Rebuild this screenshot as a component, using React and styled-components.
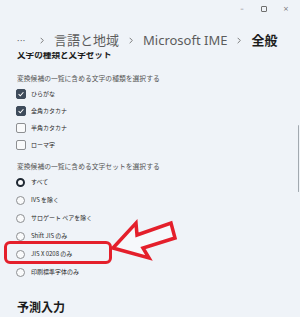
import styled, { createGlobalStyle } from "styled-components";

const GlobalStyle = createGlobalStyle`
    html, body {
        margin: 0;
        padding: 0;
        background: #eff3f8;
    }
`

const checkItems = [
    { label: "ひらがな", checked: true },
    { label: "全角カタカナ", checked: true },
    { label: "半角カタカナ", checked: false },
    { label: "ローマ字", checked: false },
];

const radioItems = [
    { label: "すべて", selected: true },
    { label: "IVS を除く" },
    { label: "サロゲート ペアを除く" },
    { label: "Shift JIS のみ" },
    { label: "JIS X 0208 のみ", marked: true },
    { label: "印刷標準字体のみ" },
];

function Chevron() {
    return (
        <ChevronIcon viewBox="0 0 6 10" width="4" height="7">
            <path d="M1 1 L5 5 L1 9" fill="none" stroke="#6b6b6b" strokeWidth="1.3" />
        </ChevronIcon>
    );
}

function CheckRow({ label, checked }) {
    return (
        <Row>
            <Box checked={checked}>
                {checked && (
                    <svg viewBox="0 0 10 10" width="8" height="8">
                        <path d="M2 5.2 L4.1 7.2 L8 2.8" fill="none" stroke="#ffffff" strokeWidth="1.3" />
                    </svg>
                )}
            </Box>
            <Label>{label}</Label>
        </Row>
    );
}

function RadioRow({ label, selected, marked }) {
    return (
        <RadioLine>
            <Circle selected={selected} />
            <Label>{label}</Label>
            {marked && (
                <>
                    <Highlight />
                    <Arrow viewBox="108 218 72 46" width="72" height="46">
                        <polygon
                            points="113,248 136,223 137,235 171,223 175,238 143,248 149,258"
                            fill="#f6f8fb"
                            stroke="#e41f2b"
                            strokeWidth="3.5"
                            strokeLinejoin="miter"
                        />
                    </Arrow>
                </>
            )}
        </RadioLine>
    );
}

export default function App() {
    return (
        <>
            <GlobalStyle />
            <Window>
                <TitleBar>
                    <Control>–</Control>
                    <Control><MaxBox /></Control>
                    <Control>×</Control>
                </TitleBar>
                <Breadcrumb>
                    <Dots>···</Dots>
                    <Chevron />
                    <Crumb>言語と地域</Crumb>
                    <Chevron />
                    <Crumb>Microsoft IME</Crumb>
                    <Chevron />
                    <Current>全般</Current>
                </Breadcrumb>
                <Content>
                    <Scroll>
                        <SectionTitle>文字の種類と文字セット</SectionTitle>
                        <Description>変換候補の一覧に含める文字の種類を選択する</Description>
                        <List>
                            {checkItems.map((item) => (
                                <CheckRow key={item.label} {...item} />
                            ))}
                        </List>
                        <Description gap="8px">変換候補の一覧に含める文字セットを選択する</Description>
                        <List>
                            {radioItems.map((item) => (
                                <RadioRow key={item.label} {...item} />
                            ))}
                        </List>
                        <NextTitle>予測入力</NextTitle>
                    </Scroll>
                    <ScrollThumb />
                </Content>
            </Window>
        </>
    );
}

const Window = styled.div`
    width: 300px;
    height: 317px;
    overflow: hidden;
    display: flex;
    flex-direction: column;
    background: #eff3f8;
    font-family: "Noto Sans CJK JP", "Noto Sans", sans-serif;
    color: #1b1b1b;
`
const TitleBar = styled.div`
    height: 18px;
    display: flex;
    justify-content: flex-end;
    align-items: center;
    gap: 12px;
    padding-right: 9px;
    flex-shrink: 0;
`
const Control = styled.span`
    width: 10px;
    display: flex;
    justify-content: center;
    align-items: center;
    font-family: "DejaVu Sans", sans-serif;
    font-size: 7px;
    color: #6f6f6f;
`
const MaxBox = styled.span`
    width: 4px;
    height: 4px;
    border: 1px solid #6f6f6f;
    border-radius: 1px;
`
const Breadcrumb = styled.div`
    height: 34px;
    box-sizing: border-box;
    padding: 0 0 4px 17px;
    display: flex;
    align-items: flex-end;
    gap: 10px;
    flex-shrink: 0;
    font-family: "Noto Sans", "Noto Sans CJK JP", sans-serif;
    font-size: 13px;
    line-height: 16px;
`
const Dots = styled.span`
    width: 13px;
    font-size: 9px;
    line-height: 14px;
    letter-spacing: 0.5px;
    color: #6b6b6b;
    white-space: nowrap;
`
const ChevronIcon = styled.svg`
    margin-bottom: 4px;
`
const Crumb = styled.span`
    color: #5c5c5c;
    white-space: nowrap;
`
const Current = styled.span`
    font-weight: 700;
    color: #1b1b1b;
    white-space: nowrap;
`
const Content = styled.div`
    flex: 1;
    overflow: hidden;
    position: relative;
`
const Scroll = styled.div`
    padding-left: 16px;
    display: flex;
    flex-direction: column;
`
const SectionTitle = styled.div`
    margin-top: -4px;
    font-size: 8.6px;
    line-height: 12px;
    font-weight: 700;
    padding-left: 1px;
`
const Description = styled.div`
    margin-top: ${(props) => props.gap || "13px"};
    font-size: 6.8px;
    line-height: 10px;
    color: #555;
    padding-left: 1px;
    white-space: nowrap;
`
const List = styled.div`
    margin-top: 2px;
    display: flex;
    flex-direction: column;
`
const Row = styled.div`
    height: 17px;
    display: flex;
    align-items: center;
    gap: 5px;
`
const RadioLine = styled.div`
    position: relative;
    height: 18px;
    display: flex;
    align-items: center;
    gap: 6px;
`
const Box = styled.span`
    width: 10px;
    height: 10px;
    box-sizing: border-box;
    border-radius: 2px;
    display: flex;
    align-items: center;
    justify-content: center;
    background: ${(props) => (props.checked ? "#3e4b5b" : "#f9fafb")};
    border: 1px solid ${(props) => (props.checked ? "#3e4b5b" : "#8d8f92")};
`
const Circle = styled.span`
    width: 9px;
    height: 9px;
    box-sizing: border-box;
    border-radius: 50%;
    background: #f9fafb;
    border: ${(props) => (props.selected ? "2.6px solid #1f2833" : "1px solid #8d8f92")};
`
const Label = styled.span`
    font-size: 6px;
    line-height: 10px;
    color: #2a2a2a;
    white-space: nowrap;
`
const Highlight = styled.span`
    position: absolute;
    left: -12px;
    top: -4px;
    width: 108px;
    height: 23px;
    box-sizing: border-box;
    border: 3.5px solid #e41f2b;
    border-radius: 6px;
`
const Arrow = styled.svg`
    position: absolute;
    left: 92px;
    top: -27px;
    overflow: visible;
`
const NextTitle = styled.div`
    margin-top: 18px;
    font-size: 12px;
    line-height: 16px;
    font-weight: 700;
    padding-left: 1px;
`
const ScrollThumb = styled.span`
    position: absolute;
    right: 1px;
    top: 73px;
    width: 1.5px;
    height: 67px;
    border-radius: 1px;
    background: #a2a9b0;
`
